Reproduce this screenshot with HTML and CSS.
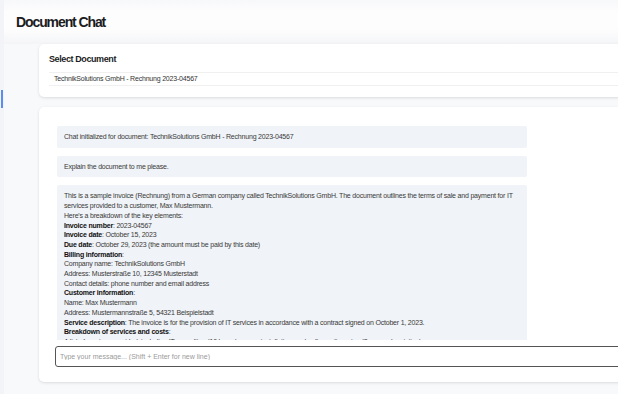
FILE: index.html
```html
<!DOCTYPE html>
<html lang="en">
<head>
  <meta charset="UTF-8" />
  <title>Document Chat</title>
  <link rel="stylesheet" href="styles.css">
</head>
<body>
  <div class="app">
    <div class="sidebar">
      <div class="sidebar-mark"></div>
    </div>
    <div class="main">
      <header class="page-header">
        <h1>Document Chat</h1>
      </header>

      <section class="card select-card">
        <h2>Select Document</h2>
        <div class="select-box">TechnikSolutions GmbH - Rechnung 2023-04567</div>
      </section>

      <section class="card chat-card">
        <div class="messages">
          <div class="message">Chat initialized for document: TechnikSolutions GmbH - Rechnung 2023-04567</div>
          <div class="message">Explain the document to me please.</div>
          <div class="message">
            This is a sample invoice (Rechnung) from a German company called TechnikSolutions GmbH. The document outlines the terms of sale and payment for IT services provided to a customer, Max Mustermann.<br>
            Here's a breakdown of the key elements:<br>
            <b>Invoice number</b>: 2023-04567<br>
            <b>Invoice date</b>: October 15, 2023<br>
            <b>Due date</b>: October 29, 2023 (the amount must be paid by this date)<br>
            <b>Billing information</b>:<br>
            Company name: TechnikSolutions GmbH<br>
            Address: Musterstraße 10, 12345 Musterstadt<br>
            Contact details: phone number and email address<br>
            <b>Customer information</b>:<br>
            Name: Max Mustermann<br>
            Address: Mustermannstraße 5, 54321 Beispielstadt<br>
            <b>Service description</b>: The invoice is for the provision of IT services in accordance with a contract signed on October 1, 2023.<br>
            <b>Breakdown of services and costs</b>:<br>
            A list of services provided, including IT consulting (10 hours), server installation, and software licensing (2-year subscription).
          </div>
        </div>
        <input type="text" class="chat-input" placeholder="Type your message... (Shift + Enter for new line)" />
      </section>
    </div>
  </div>
</body>
</html>
```

FILE: styles.css
```css
* {
  box-sizing: border-box;
}

body {
  margin: 0;
  padding: 0;
  font-family: 'Liberation Sans', Arial, sans-serif;
  background: #f8f9fb;
  color: #222;
  overflow: hidden;
}

.app {
  display: flex;
  min-height: 394px;
}

.sidebar {
  width: 4px;
  flex-shrink: 0;
  background: #f2f4f7;
  padding-top: 90px;
}

.sidebar-mark {
  width: 2px;
  height: 18px;
  margin-left: 1px;
  background: #5b8def;
}

.main {
  flex: 1;
  min-width: 0;
}

.page-header {
  height: 44px;
  padding: 14px 0 0 12px;
  background: linear-gradient(#f7f8fa 0, #fdfdfe 12px, #fdfdfe 30px, #f4f5f7 44px);
}

.page-header h1 {
  margin: 0;
  font-size: 14px;
  line-height: 16px;
  letter-spacing: -1.1px;
  color: #1c1c1e;
}

.card {
  width: 640px;
  margin-left: 35px;
  background: #fff;
  border-radius: 5px;
  box-shadow: 0 1px 3px rgba(0, 0, 0, 0.12);
}

.select-card {
  height: 53px;
  padding: 10px 10px 0 10px;
}

.select-card h2 {
  margin: 0 0 8px 0;
  font-size: 9px;
  letter-spacing: -0.4px;
  color: #1c1c1e;
}

.select-box {
  height: 14px;
  padding: 0 5px;
  border-top: 1px solid #f0f0f0;
  border-bottom: 1px solid #f0f0f0;
  font-size: 7px;
  line-height: 12px;
  letter-spacing: -0.2px;
  color: #333;
}

.chat-card {
  margin-top: 10px;
  height: 275px;
  padding: 19px 0 16px 16px;
}

.messages {
  width: 488px;
  height: 214px;
  overflow: hidden;
  padding-left: 2px;
  padding-right: 16px;
  display: flex;
  flex-direction: column;
  gap: 8px;
}

.message {
  flex-shrink: 0;
  background: #f0f3f7;
  border-radius: 2px;
  padding: 6px 7px;
  font-size: 7px;
  line-height: 9.7px;
  letter-spacing: -0.2px;
  color: #3a3a3a;
}

.message b {
  color: #111;
}

.chat-input {
  display: block;
  width: 620px;
  height: 21px;
  margin-top: 6px;
  padding: 0 4px;
  border: 1px solid #555;
  border-radius: 3px;
  font-family: 'Liberation Sans', Arial, sans-serif;
  font-size: 7px;
  background: #fff;
}

.chat-input::placeholder {
  color: #9a9a9a;
}
```
